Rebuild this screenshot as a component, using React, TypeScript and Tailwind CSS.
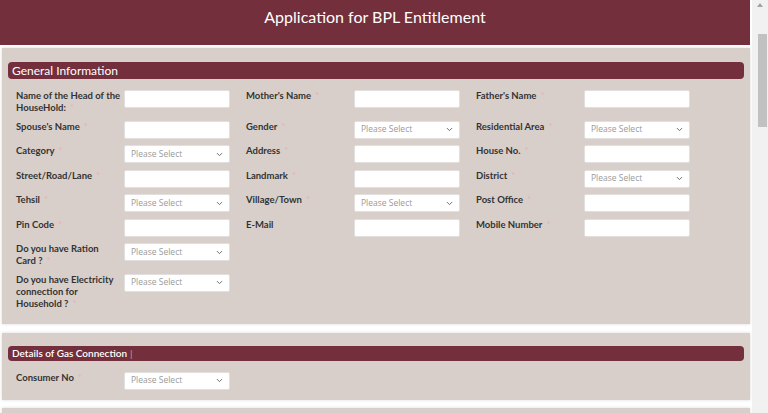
import { ChevronDown } from "lucide-react";

type Field = { label: string; kind: "input" | "select"; required?: boolean };

const rows: Field[][] = [
  [
    { label: "Name of the Head of the\nHouseHold:", kind: "input", required: true },
    { label: "Mother's Name", kind: "input", required: true },
    { label: "Father's Name", kind: "input", required: true },
  ],
  [
    { label: "Spouse's Name", kind: "input", required: true },
    { label: "Gender", kind: "select", required: true },
    { label: "Residential Area", kind: "select", required: true },
  ],
  [
    { label: "Category", kind: "select", required: true },
    { label: "Address", kind: "input", required: true },
    { label: "House No.", kind: "input", required: true },
  ],
  [
    { label: "Street/Road/Lane", kind: "input", required: true },
    { label: "Landmark", kind: "input", required: true },
    { label: "District", kind: "select", required: true },
  ],
  [
    { label: "Tehsil", kind: "select", required: true },
    { label: "Village/Town", kind: "select", required: true },
    { label: "Post Office", kind: "input", required: true },
  ],
  [
    { label: "Pin Code", kind: "input", required: true },
    { label: "E-Mail", kind: "input" },
    { label: "Mobile Number", kind: "input", required: true },
  ],
  [{ label: "Do you have Ration\nCard ?", kind: "select", required: true }],
  [{ label: "Do you have Electricity\nconnection for\nHousehold ?", kind: "select", required: true }],
];

function Control({ kind }: { kind: "input" | "select" }) {
  if (kind === "select") {
    return (
      <div className="flex h-[18px] w-[106px] shrink-0 items-center justify-between rounded-[2px] border border-[#e2e0de] bg-white pl-[6px] pr-[5px]">
        <span className="font-['Open_Sans',sans-serif] text-[8.5px] text-[#9a9a9a]">Please Select</span>
        <ChevronDown size={9} strokeWidth={2.5} color="#666" />
      </div>
    );
  }
  return <div className="h-[18px] w-[106px] shrink-0 rounded-[2px] border border-[#e2e0de] bg-white" />;
}

function FieldGroup({ field }: { field: Field }) {
  return (
    <div className="flex w-[230px] items-start">
      <label className="w-[108px] shrink-0 whitespace-pre-line pr-[2px] text-[9.5px] leading-[12px] font-bold text-[#333]">
        {field.label}
        {field.required && <span className="ml-[4px] font-normal text-[#e7b3b3]">*</span>}
      </label>
      <Control kind={field.kind} />
    </div>
  );
}

function SectionBar({ title, small }: { title: string; small?: boolean }) {
  return (
    <div
      className={`flex items-center rounded-[4px] bg-[#732f3c] pl-[4px] text-white ${
        small ? "h-[15px] text-[10px] font-semibold" : "h-[17px] text-[12px]"
      }`}
    >
      {title}
      {small && <span className="ml-[3px] text-[#b88c94]">|</span>}
    </div>
  );
}

export default function App() {
  return (
    <div className="flex h-[413px] w-[768px] overflow-hidden bg-white font-['Lato',sans-serif]">
      <div className="w-[752px]">
        <header className="flex h-[45px] w-[750px] justify-center bg-[#732f3c] pt-[5px] text-[16px] leading-[24px] text-white">
          Application for BPL Entitlement
        </header>

        <section className="mt-[3px] ml-[2px] w-[748px] bg-[#d8cfca] px-[6px] pt-[14px] pb-[14px] shadow-[0_0_3px_rgba(0,0,0,0.15)]">
          <SectionBar title="General Information" />
          <div className="mt-[11px] ml-[8px] flex flex-col gap-[6.5px]">
            {rows.map((row, i) => (
              <div key={i} className="flex">
                {row.map((f) => (
                  <FieldGroup key={f.label} field={f} />
                ))}
              </div>
            ))}
          </div>
        </section>

        <section className="mt-[9px] ml-[2px] w-[748px] bg-[#d8cfca] px-[6px] pt-[13px] pb-[10px] shadow-[0_0_3px_rgba(0,0,0,0.15)]">
          <SectionBar title="Details of Gas Connection" small />
          <div className="mt-[11px] ml-[8px] flex">
            <FieldGroup field={{ label: "Consumer No", kind: "select", required: true }} />
          </div>
        </section>

        <section className="mt-[8px] ml-[2px] h-[40px] w-[748px] bg-[#d8cfca] shadow-[0_0_3px_rgba(0,0,0,0.15)]" />
      </div>

      <div className="relative w-[16px] bg-[#f1f1f1]">
        <div className="absolute top-[3px] left-[5px] h-0 w-0 border-x-[3px] border-b-[4px] border-x-transparent border-b-[#a3a3a3]" />
        <div className="absolute top-[34px] left-[6px] h-[93px] w-[9px] bg-[#c1c1c1]" />
      </div>
    </div>
  );
}
